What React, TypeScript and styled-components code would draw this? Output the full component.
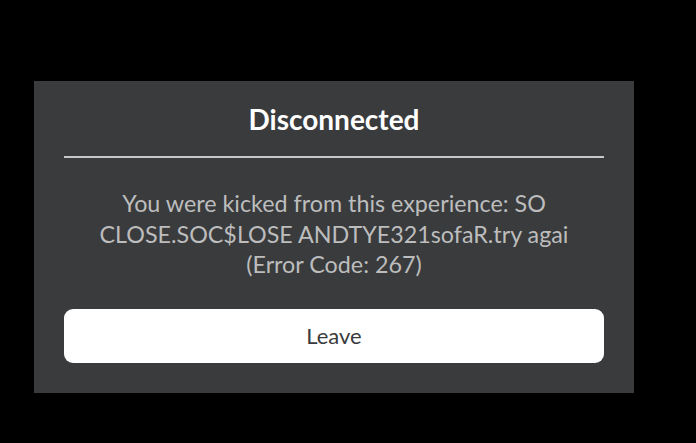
import styled, { createGlobalStyle } from "styled-components";

const GlobalStyle = createGlobalStyle`
  html, body {
    margin: 0;
    padding: 0;
    background: #000000;
  }
  body {
    font-family: Lato, "Open Sans", "Noto Sans", sans-serif;
  }
`;

const Screen = styled.div`
  width: 696px;
  height: 443px;
  box-sizing: border-box;
  padding: 81px 0 0 34px;
  background: #000000;
`;

const Dialog = styled.div`
  width: 600px;
  box-sizing: border-box;
  padding: 0 30px 30px;
  background: #393b3d;
  display: flex;
  flex-direction: column;
`;

const Header = styled.div`
  height: 75px;
  display: flex;
  align-items: center;
  justify-content: center;
`;

const Title = styled.h1`
  margin: 0;
  font-size: 28px;
  font-weight: 700;
  color: #ffffff;
`;

const Divider = styled.div`
  height: 2px;
  background: #c8c8c8;
`;

const Message = styled.p`
  margin: 30px 0 29px;
  font-size: 23.3px;
  line-height: 30.5px;
  color: #bdbdbd;
  text-align: center;
`;

const LeaveButton = styled.button`
  height: 54px;
  border: none;
  border-radius: 9px;
  background: #ffffff;
  color: #393b3d;
  font-family: inherit;
  font-size: 22px;
  cursor: pointer;
`;

export default function App() {
  return (
    <Screen>
      <GlobalStyle />
      <Dialog>
        <Header>
          <Title>Disconnected</Title>
        </Header>
        <Divider />
        <Message>
          You were kicked from this experience: SO
          <br />
          CLOSE.SOC$LOSE ANDTYE321sofaR.try agai
          <br />
          (Error Code: 267)
        </Message>
        <LeaveButton>Leave</LeaveButton>
      </Dialog>
    </Screen>
  );
}
